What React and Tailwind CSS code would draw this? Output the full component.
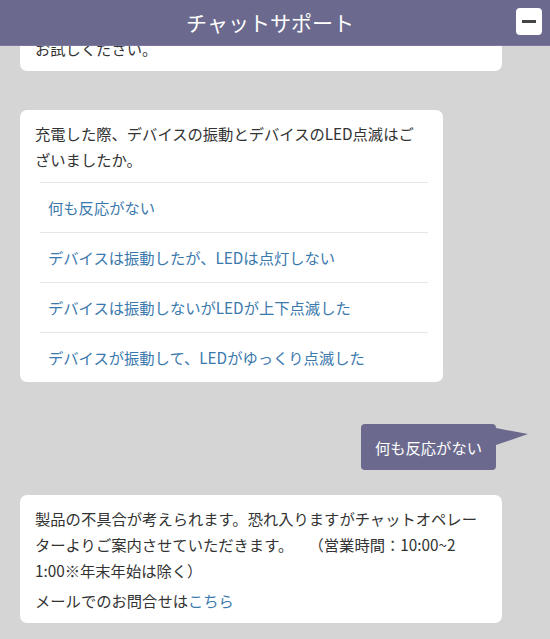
import React from 'react';

const choices = [
    '何も反応がない',
    'デバイスは振動したが、LEDは点灯しない',
    'デバイスは振動しないがLEDが上下点滅した',
    'デバイスが振動して、LEDがゆっくり点滅した',
];

function App() {
    return (
        <div
            className="w-[550px] h-[639px] flex flex-col bg-[#d5d5d5] text-[#333333] overflow-hidden [text-spacing-trim:space-all]"
            style={{ fontFamily: '"Noto Sans CJK JP", "Noto Sans", sans-serif' }}
        >
            {/* Header */}
            <div className="relative z-10 shrink-0 h-[46px] bg-[#6b6a8e] border-b border-[#7a799b] flex items-center">
                <div className="flex-1 text-center text-white text-[21px] leading-none pr-[10px]">
                    チャットサポート
                </div>
                <button className="absolute right-[8px] top-[8px] w-[26px] h-[27px] rounded-[4px] bg-white flex items-center justify-center">
                    <span className="block w-[14px] h-[3px] bg-[#444444]" />
                </button>
            </div>

            {/* Messages */}
            <div className="flex-1 overflow-hidden text-[15.3px] leading-[26px]">
                {/* partly scrolled bubble */}
                <div className="mt-[-21px] ml-[20px] w-[482px] bg-white rounded-[7px] px-[15px] py-[10px]">
                    <p>お試しください。</p>
                </div>

                {/* question with choices */}
                <div className="mt-[39px] ml-[20px] w-[423px] bg-white rounded-[7px] pl-[15px] pr-[15px] pt-[10px]">
                    <p className="whitespace-nowrap">
                        充電した際、デバイスの振動とデバイスのLED点滅はご
                        <br />
                        ざいましたか。
                    </p>
                    <ul className="mt-[10px] ml-[5px]">
                        {choices.map((c) => (
                            <li
                                key={c}
                                className="border-t border-[#e6e6e6] py-3 pl-2 leading-[25px] text-[#3b79ad] whitespace-nowrap"
                            >
                                {c}
                            </li>
                        ))}
                    </ul>
                </div>

                {/* user reply */}
                <div className="mt-[42px] flex justify-end pr-[54px]">
                    <div className="relative bg-[#6b6a8e] text-white rounded-[4px] px-[14px] py-[10px]">
                        何も反応がない
                        <svg
                            className="absolute left-full top-[4px]"
                            width="32"
                            height="20"
                            viewBox="0 0 32 20"
                        >
                            <polygon points="0,0 32,6 0,17" fill="#6b6a8e" />
                        </svg>
                    </div>
                </div>

                {/* answer */}
                <div className="mt-[25px] ml-[20px] w-[482px] bg-white rounded-[7px] px-[15px] py-[10px]">
                    <p className="whitespace-nowrap">
                        製品の不具合が考えられます。恐れ入りますがチャットオペレー
                        <br />
                        ターよりご案内させていただきます。　（営業時間：10:00~2
                        <br />
                        1:00※年末年始は除く）
                    </p>
                    <p className="mt-[4px]">
                        メールでのお問合せは
                        <a href="#" className="text-[#3b79ad]">こちら</a>
                    </p>
                </div>
            </div>
        </div>
    );
}

export default App;
